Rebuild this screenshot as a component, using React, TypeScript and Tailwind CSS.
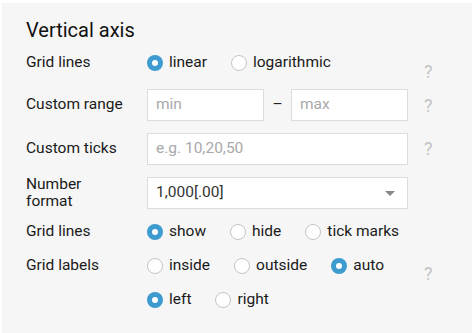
import React from 'react';

const Radio: React.FC<{ label: string; checked?: boolean; last?: boolean }> = ({ label, checked, last }) => (
  <label className={`flex items-center ${last ? '' : 'mr-[24px]'}`}>
    {checked ? (
      <span className="w-[16px] h-[16px] rounded-full bg-[#3d9bd0] flex items-center justify-center">
        <span className="w-[6px] h-[6px] rounded-full bg-white" />
      </span>
    ) : (
      <span className="w-[16px] h-[16px] rounded-full bg-white border border-[#c4c4c4]" />
    )}
    <span className="ml-[6px]">{label}</span>
  </label>
);

const Help: React.FC<{ offset?: string }> = ({ offset = '' }) => (
  <span className={`ml-[16px] text-[18px] text-[#c2c2c2] ${offset}`}>?</span>
);

const App: React.FC = () => {
  return (
    <div className="w-[474px] h-[333px] bg-white pt-[3px] pl-[2px]">
      <div
        className="h-[330px] w-[470px] bg-[#f6f6f6] pl-[24px] text-[15.5px] text-[#1a1a1a] flex flex-col"
        style={{ fontFamily: 'Roboto, "Noto Sans", sans-serif' }}
      >
        <h2 className="mt-[14px] h-[26px] text-[20px] leading-[26px] font-normal text-[#111]">Vertical axis</h2>

        <div className="mt-[6px] h-[28px] flex items-center">
          <div className="w-[121px]">Grid lines</div>
          <div className="w-[261px] flex items-center">
            <Radio label="linear" checked />
            <Radio label="logarithmic" last />
          </div>
          <Help offset="mt-[16px]" />
        </div>

        <div className="mt-[12px] h-[32px] flex items-center">
          <div className="w-[121px]">Custom range</div>
          <div className="w-[261px] flex items-center">
            <div className="w-[117px] h-[32px] bg-white border border-[#dcdcdc] px-[8px] flex items-center text-[#a9a9a9]">min</div>
            <div className="w-[27px] text-center text-[#222]">–</div>
            <div className="w-[117px] h-[32px] bg-white border border-[#dcdcdc] px-[8px] flex items-center text-[#a9a9a9]">max</div>
          </div>
          <Help />
        </div>

        <div className="mt-[12px] h-[32px] flex items-center">
          <div className="w-[121px]">Custom ticks</div>
          <div className="w-[261px] h-[32px] bg-white border border-[#dcdcdc] px-[8px] flex items-center text-[#a9a9a9]">e.g. 10,20,50</div>
          <Help offset="-mt-[2px]" />
        </div>

        <div className="mt-[12px] h-[32px] flex items-center">
          <div className="w-[121px] leading-[17px]">
            Number
            <br />
            format
          </div>
          <div className="w-[261px] h-[32px] bg-white border border-[#dcdcdc] pl-[8px] pr-[12px] flex items-center justify-between text-[#333]">
            <span>1,000[.00]</span>
            <span className="w-0 h-0 border-l-[5px] border-r-[5px] border-t-[5px] border-l-transparent border-r-transparent border-t-[#888]" />
          </div>
        </div>

        <div className="mt-[11px] h-[24px] flex items-center">
          <div className="w-[121px]">Grid lines</div>
          <div className="flex items-center">
            <Radio label="show" checked />
            <Radio label="hide" />
            <Radio label="tick marks" last />
          </div>
        </div>

        <div className="mt-[10px] h-[24px] flex items-center">
          <div className="w-[121px]">Grid labels</div>
          <div className="w-[261px] flex items-center">
            <Radio label="inside" />
            <Radio label="outside" />
            <Radio label="auto" checked last />
          </div>
          <Help offset="mt-[14px]" />
        </div>

        <div className="mt-[10px] h-[24px] flex items-center">
          <div className="w-[121px]" />
          <div className="flex items-center">
            <Radio label="left" checked />
            <Radio label="right" last />
          </div>
        </div>
      </div>
    </div>
  );
};

export default App;
